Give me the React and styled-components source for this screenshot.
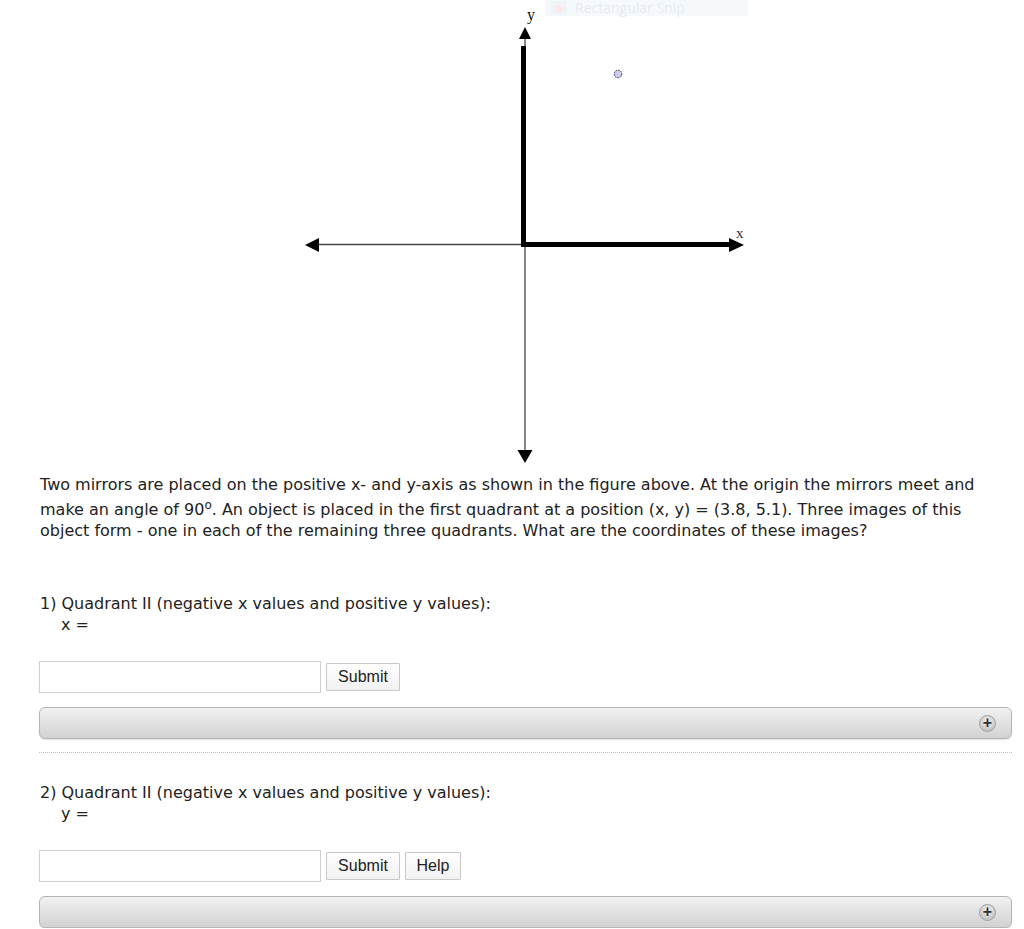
import React from "react";
import styled, { createGlobalStyle } from "styled-components";

const GlobalStyle = createGlobalStyle`
  body {
    margin: 0;
    background: #fff;
    font-family: "DejaVu Sans", Verdana, sans-serif;
    color: #222;
  }
`;

const Page = styled.div`
  position: relative;
  padding: 0 12px 0 39px;
`;

const Snip = styled.div`
  position: absolute;
  top: 0;
  left: 545px;
  width: 203px;
  height: 16px;
  background: #f6f9fc;
  display: flex;
  align-items: center;
  gap: 8px;
  padding-left: 6px;
  box-sizing: border-box;
  font-family: "Open Sans", sans-serif;
  font-size: 14px;
  line-height: 16px;
  color: #e6ebf2;
  span {
    width: 16px;
    height: 14px;
    background: #f0f4f9;
    position: relative;
  }
  span::after {
    content: "";
    position: absolute;
    left: 5px;
    top: 4px;
    width: 7px;
    height: 7px;
    border-radius: 50%;
    background: #fbe9e6;
  }
`;

const Figure = styled.svg`
  display: block;
  margin-left: 251px;
`;

const Prompt = styled.p`
  margin: 0;
  font-size: 16px;
  line-height: 21px;
  padding-left: 1px;
  sup {
    font-size: 12px;
  }
`;

const Question = styled.div`
  margin-top: ${(p) => p.top}px;
  font-size: 16px;
  line-height: 21px;
  padding-left: 1px;
`;

const Label = styled.div`
  padding-left: 21px;
`;

const AnswerRow = styled.div`
  display: flex;
  align-items: center;
  gap: 5px;
  margin-top: 26px;
  height: 32px;
`;

const Field = styled.input`
  width: 282px;
  height: 32px;
  box-sizing: border-box;
  border: 1px solid #cfcfcf;
  margin: 0;
  padding: 2px 6px;
  font-size: 15px;
`;

const Button = styled.button`
  height: 28px;
  width: ${(p) => p.w}px;
  box-sizing: border-box;
  border: 1px solid #c8c8c8;
  border-radius: 1px;
  background: linear-gradient(#ffffff, #f1f1f1);
  font-family: "Liberation Sans", Arial, sans-serif;
  font-size: 16px;
  color: #222;
  padding: 0;
  margin: 0;
`;

const Accordion = styled.div`
  margin-top: 14px;
  height: 32px;
  box-sizing: border-box;
  border: 1px solid #b4b4b4;
  border-radius: 6px;
  background: linear-gradient(#f1f1f1, #d2d2d2);
  box-shadow: 0 1px 1px rgba(0, 0, 0, 0.12);
  display: flex;
  align-items: center;
  justify-content: flex-end;
  padding-right: 15px;
`;

const PlusIcon = styled.span`
  width: 17px;
  height: 17px;
  box-sizing: border-box;
  border-radius: 50%;
  border: 1px solid #a0a0a0;
  background: radial-gradient(circle at 50% 35%, #f2f2f2, #b4b4b4);
  display: flex;
  align-items: center;
  justify-content: center;
  color: #333;
  font-family: "Liberation Sans", Arial, sans-serif;
  font-size: 16px;
  font-weight: bold;
  line-height: 1;
`;

const Divider = styled.div`
  margin-top: 13px;
  border-top: 1px dotted #bdbdbd;
`;

const Section = ({ num, label, top, help }) => (
  <>
    <Question top={top}>
      {num}) Quadrant II (negative x values and positive y values):
      <Label>{label} =</Label>
    </Question>
    <AnswerRow>
      <Field type="text" />
      <Button w={74}>Submit</Button>
      {help && <Button w={56}>Help</Button>}
    </AnswerRow>
    <Accordion>
      <PlusIcon>+</PlusIcon>
    </Accordion>
  </>
);

const MirrorFigure = () => (
  <Figure width="470" height="474" viewBox="290 0 470 474">
    <line x1="525" y1="34" x2="525" y2="452" stroke="#444" strokeWidth="1.3" />
    <line x1="316" y1="244.5" x2="734" y2="244.5" stroke="#444" strokeWidth="1.3" />
    <rect x="521" y="46" width="5" height="201" fill="#000" />
    <rect x="521" y="242" width="211" height="5" fill="#000" />
    <polygon points="525,27 519,39 531,39" fill="#000" />
    <polygon points="525,463 517.5,450 532.5,450" fill="#000" />
    <polygon points="305,245 319,238 319,252" fill="#000" />
    <polygon points="744,245 729,238 729,252" fill="#000" />
    <text x="527" y="20" fontFamily="Liberation Serif, serif" fontSize="16" fill="#111">y</text>
    <text x="736" y="238" fontFamily="Liberation Serif, serif" fontSize="15" fill="#333">x</text>
    <circle cx="618" cy="74" r="3.8" fill="#c9c9f2" stroke="#333" strokeWidth="1" strokeDasharray="1.5 1" />
  </Figure>
);

export default function App() {
  return (
    <Page>
      <GlobalStyle />
      <Snip>
        <span />
        Rectangular Snip
      </Snip>
      <MirrorFigure />
      <Prompt>
        Two mirrors are placed on the positive x- and y-axis as shown in the figure above. At the origin the mirrors meet and
        <br />
        make an angle of 90<sup>o</sup>. An object is placed in the first quadrant at a position (x, y) = (3.8, 5.1). Three images of this
        <br />
        object form - one in each of the remaining three quadrants. What are the coordinates of these images?
      </Prompt>
      <Section num={1} label="x" top={52} />
      <Divider />
      <Section num={2} label="y" top={29} help />
    </Page>
  );
}
